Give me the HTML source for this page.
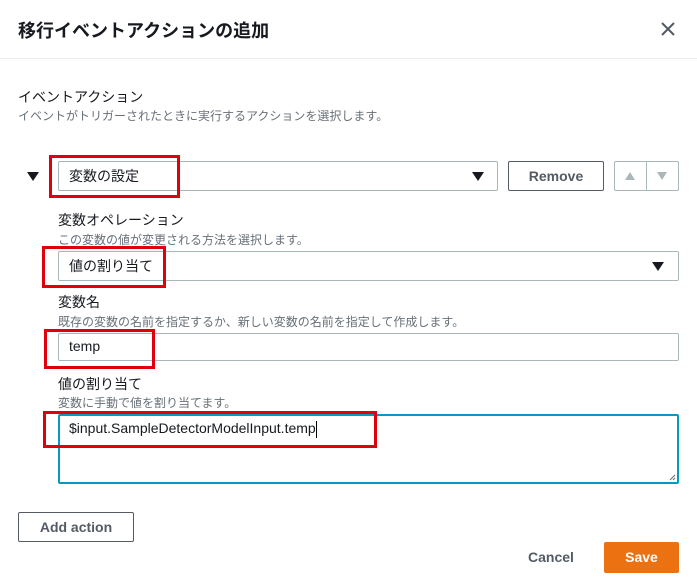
<!DOCTYPE html>
<html><head><meta charset="utf-8"><style>
*{box-sizing:border-box;margin:0;padding:0}
body{width:697px;height:588px;background:#fff;position:relative;overflow:hidden;font-family:"Liberation Sans","Noto Sans CJK JP",sans-serif;color:#16191f}
.a{position:absolute}
.box{position:absolute;border:1px solid #aab7b8;background:#fff;border-radius:2px}
.red{position:absolute;border:3px solid #e0000b}
.lbl{position:absolute;font-size:14px;color:#16191f;white-space:nowrap}
.desc{position:absolute;font-size:12px;color:#687078;white-space:nowrap}
.val{position:absolute;font-size:14px;white-space:nowrap}
.tri{position:absolute;width:0;height:0;border-left:6px solid transparent;border-right:6px solid transparent;border-top:9px solid #16191f}
.btn{position:absolute;border:1px solid #545b64;border-radius:2px;font-weight:bold;font-size:14px;color:#545b64;text-align:center;background:#fff}
</style></head><body>
<div class="a" style="left:18px;top:17px;font-size:18px;font-weight:bold">移行イベントアクションの追加</div>
<svg class="a" style="left:661px;top:22px" width="14" height="14"><path d="M1 1L13 13M13 1L1 13" stroke="#545b64" stroke-width="2"/></svg>
<div class="a" style="left:0;top:58px;width:697px;height:1px;background:#eaeded"></div>
<div class="lbl" style="left:18px;top:87px">イベントアクション</div>
<div class="desc" style="left:18px;top:107px">イベントがトリガーされたときに実行するアクションを選択します。</div>

<div class="tri" style="left:27px;top:172px"></div>
<div class="box" style="left:58px;top:161px;width:440px;height:30px"></div>
<div class="val" style="left:69px;top:166px">変数の設定</div>
<div class="tri" style="left:472px;top:172px"></div>
<div class="red" style="left:49px;top:155px;width:131px;height:43px"></div>
<div class="btn" style="left:508px;top:161px;width:96px;height:30px;line-height:28px">Remove</div>
<div class="box" style="left:614px;top:161px;width:65px;height:30px;border-color:#aab7b8"></div>
<div class="a" style="left:646px;top:161px;width:1px;height:30px;background:#aab7b8"></div>
<div class="a" style="left:625px;top:172px;width:0;height:0;border-left:5px solid transparent;border-right:5px solid transparent;border-bottom:8px solid #aab7b8"></div>
<div class="a" style="left:657px;top:172px;width:0;height:0;border-left:5px solid transparent;border-right:5px solid transparent;border-top:8px solid #aab7b8"></div>

<div class="lbl" style="left:58px;top:210px">変数オペレーション</div>
<div class="desc" style="left:58px;top:231px">この変数の値が変更される方法を選択します。</div>
<div class="box" style="left:58px;top:251px;width:621px;height:30px"></div>
<div class="val" style="left:69px;top:256px">値の割り当て</div>
<div class="tri" style="left:652px;top:262px"></div>
<div class="red" style="left:42px;top:246px;width:124px;height:42px"></div>

<div class="lbl" style="left:58px;top:292px">変数名</div>
<div class="desc" style="left:58px;top:313px">既存の変数の名前を指定するか、新しい変数の名前を指定して作成します。</div>
<div class="box" style="left:58px;top:333px;width:621px;height:28px"></div>
<div class="val" style="left:69px;top:338px">temp</div>
<div class="red" style="left:44px;top:329px;width:111px;height:40px"></div>

<div class="lbl" style="left:58px;top:374px">値の割り当て</div>
<div class="desc" style="left:58px;top:394px">変数に手動で値を割り当てます。</div>
<div class="a" style="left:58px;top:414px;width:621px;height:70px;border:2px solid #0a97c2;border-radius:2px"></div>
<svg class="a" style="left:669px;top:474px" width="7" height="7"><path d="M1 6L6 1M4 6L6 4" stroke="#687078" stroke-width="1"/></svg>
<div class="val" style="left:69px;top:420px">$input.SampleDetectorModelInput.temp<span style="display:inline-block;width:1px;height:17px;background:#000;vertical-align:middle"></span></div>
<div class="red" style="left:43px;top:411px;width:334px;height:37px"></div>

<div class="btn" style="left:18px;top:512px;width:116px;height:30px;line-height:28px">Add action</div>
<div class="a" style="left:528px;top:549px;font-size:14px;font-weight:bold;color:#545b64">Cancel</div>
<div class="a" style="left:604px;top:542px;width:75px;height:31px;background:#ec7211;border-radius:2px;color:#fff;font-weight:bold;font-size:14px;text-align:center;line-height:31px">Save</div>
</body></html>
